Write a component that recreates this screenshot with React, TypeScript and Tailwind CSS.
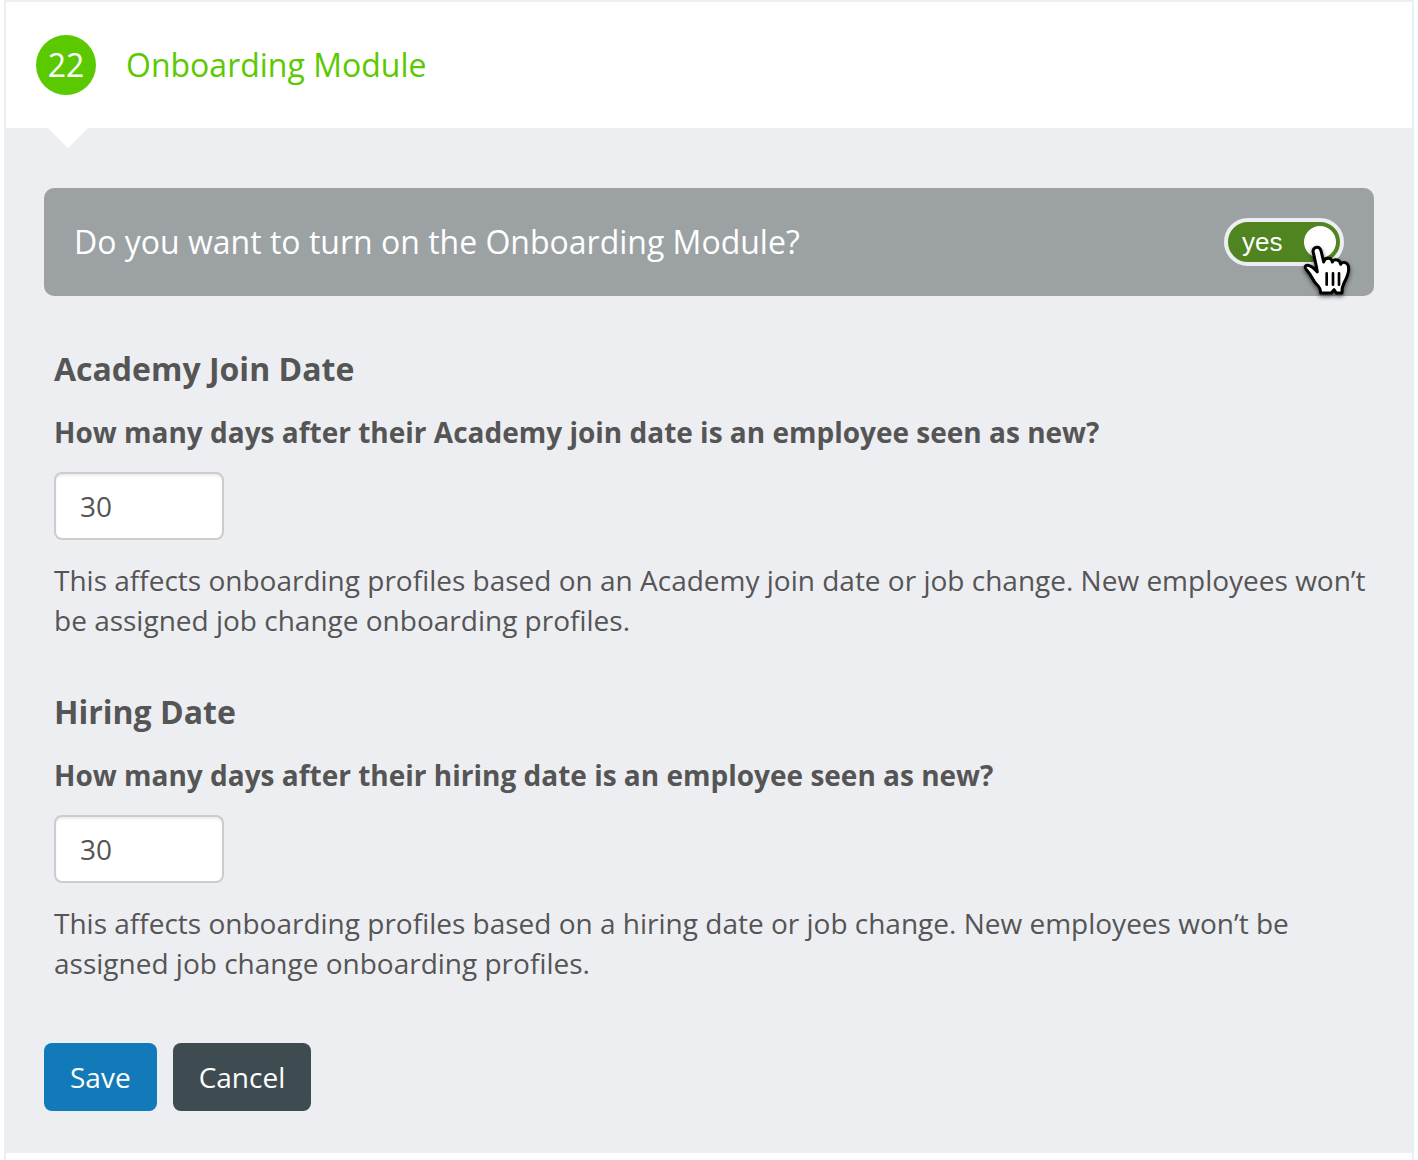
import React, { useState } from "react";

function Pointer() {
  return (
    <svg
      className="pointer-events-none absolute left-[66px] top-[17px] size-[70px] drop-shadow-[0_2px_2px_rgba(0,0,0,0.6)]"
      viewBox="0 0 210 210"
      aria-hidden="true"
    >
      <path
        d="M70 53C67 43 74 37 81 37C88 37 92 42 94 51L101 81C103 72 109 70 115 70C122 70 126 75 127 81C130 75 136 73 142 75C148 77 151 81 152 88C156 82 163 81 168 84C174 87 176 93 176 101C176 118 169 131 162 144C157 154 155 162 156 174H139L132 164L124 174H92C92 162 88 155 79 147C70 139 65 124 57 114L49 104C43 97 45 92 52 91C61 90 70 98 82 111C80 96 74 71 70 53Z"
        fill="white"
        stroke="black"
        strokeWidth="9"
        strokeLinejoin="round"
      />
      <path d="M110 115V149M129 115V149M147 115V149" stroke="black" strokeWidth="8" strokeLinecap="round" />
    </svg>
  );
}

type FieldProps = { id: string; title: string; question: string; help: string };

function DaysField({ id, title, question, help }: FieldProps) {
  const [days, setDays] = useState("30");
  return (
    <section>
      <h2 className="text-[32px] font-bold leading-[44px]">{title}</h2>
      <label htmlFor={id} className="mt-[21px] block text-[28px] font-bold leading-[40px]">
        {question}
      </label>
      <input
        id={id}
        inputMode="numeric"
        value={days}
        onChange={(e) => setDays(e.target.value)}
        className="mt-[20px] block h-[68px] w-[170px] rounded-[8px] border-2 border-[#cccccc] bg-white px-[24px] text-[28px] shadow-[inset_0_2px_2px_rgba(0,0,0,0.075)]"
      />
      <p className="mt-[20px] text-[28px] leading-[40px]">{help}</p>
    </section>
  );
}

export default function App() {
  const [on, setOn] = useState(true);
  return (
    <main className="flex min-h-screen flex-col bg-white px-1 font-['Open_Sans',sans-serif] text-[#555555]">
      <div className="flex-1 border-x-2 border-t-2 border-[#edeef2]">
        <header className="relative flex h-[126px] items-center gap-[30px] bg-white px-[30px]">
          <span className="flex size-[60px] items-center justify-center rounded-full bg-[#5bc900] text-[32px] font-medium text-white">
            22
          </span>
          <h1 className="text-[32px] text-[#5bc900]">Onboarding Module</h1>
          <svg className="absolute left-[42px] top-full h-[20px] w-[40px]" viewBox="0 0 40 20" aria-hidden="true">
            <path d="M0 0H40L20 20Z" fill="white" />
          </svg>
        </header>
        <form onSubmit={(e) => e.preventDefault()} className="bg-[#edeef2] px-[38px] pb-[42px] pt-[60px]">
          <div className="flex min-h-[108px] items-center justify-between rounded-[10px] bg-[#9ca1a4] px-[30px] text-[32px] text-white">
            <span id="module-question">Do you want to turn on the Onboarding Module?</span>
            <div className="relative">
              <button
                type="button"
                role="switch"
                aria-checked={on}
                aria-labelledby="module-question"
                onClick={() => setOn(!on)}
                className="flex h-[48px] w-[120px] items-center justify-between rounded-full border-4 border-[#edeef2] bg-[#4f8420] pl-[14px] pr-[4px] font-['Liberation_Sans',sans-serif] text-[26px] leading-[40px]"
              >
                {on ? "yes" : "no"}
                <span className="size-[32px] rounded-full bg-white" />
              </button>
              <Pointer />
            </div>
          </div>
          <div className="mt-[51px] flex flex-col gap-[50px] pl-[10px]">
            <DaysField
              id="join-days"
              title="Academy Join Date"
              question="How many days after their Academy join date is an employee seen as new?"
              help="This affects onboarding profiles based on an Academy join date or job change. New employees won’t be assigned job change onboarding profiles."
            />
            <DaysField
              id="hiring-days"
              title="Hiring Date"
              question="How many days after their hiring date is an employee seen as new?"
              help="This affects onboarding profiles based on a hiring date or job change. New employees won’t be assigned job change onboarding profiles."
            />
          </div>
          <div className="mt-[60px] flex gap-4">
            <button type="submit" className="h-[68px] rounded-[8px] bg-[#127ab8] px-[26px] text-[28px] text-white">
              Save
            </button>
            <button type="button" className="h-[68px] rounded-[8px] bg-[#3e4b51] px-[26px] text-[28px] text-white">
              Cancel
            </button>
          </div>
        </form>
      </div>
    </main>
  );
}
